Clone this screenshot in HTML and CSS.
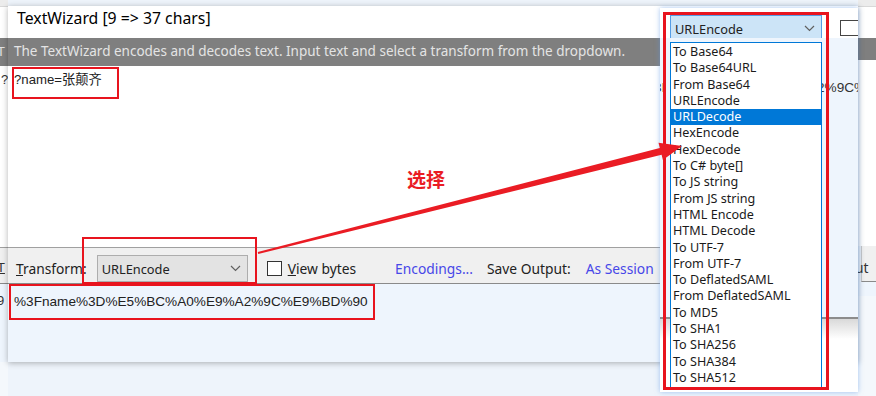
FILE: index.html
```html
<!DOCTYPE html>
<html lang="zh-CN">
<head>
    <meta charset="UTF-8">
    <meta name="viewport" content="width=device-width, initial-scale=1.0">
    <title>TextWizard</title>
    <link rel="stylesheet" href="styles.css">
</head>
<body>

<div class="desk">
    <!-- Fenster dahinter, linker Rand -->
    <div class="edge edge-left">
        <div class="edge-top"></div>
        <div class="edge-title"></div>
        <div class="edge-hint"><span class="cut">T</span></div>
        <div class="edge-input"><span>?</span></div>
        <div class="edge-bar"><span class="cut"><u>T</u></span></div>
        <div class="edge-output"><span class="cut">9</span></div>
        <div class="edge-rest"></div>
    </div>

    <!-- TextWizard Fenster -->
    <div class="wizard">
        <div class="title">TextWizard [9 =&gt; 37 chars]</div>
        <div class="hint">The TextWizard encodes and decodes text. Input text and select a transform from the dropdown.</div>
        <div class="input">?name=张颠齐</div>
        <div class="toolbar">
            <span class="label"><u>T</u>ransform:</span>
            <div class="combo">
                <span>URLEncode</span>
                <svg width="11" height="7" viewBox="0 0 11 7"><path d="M1 1 L5.5 5.5 L10 1" fill="none" stroke="#606060" stroke-width="1.2"/></svg>
            </div>
            <span class="check"></span>
            <span class="label"><u>V</u>iew bytes</span>
            <span class="link link-enc">Encodings...</span>
            <span class="label">Save Output:</span>
            <span class="link">As Session</span>
        </div>
        <div class="output">%3Fname%3D%E5%BC%A0%E9%A2%9C%E9%BD%90</div>
    </div>

    <!-- Fenster dahinter, rechter Rand -->
    <div class="edge edge-right">
        <div class="edge-top"></div>
        <div class="edge-title"></div>
        <div class="edge-hint-short"></div>
        <div class="edge-input-long"></div>
        <div class="edge-bar"><span>ut</span></div>
        <div class="edge-output-short"></div>
        <div class="edge-rest"></div>
    </div>
</div>

<!-- Ausgeklapptes Dropdown (eingefuegter Ausschnitt) -->
<div class="popup">
    <div class="popup-top">
        <div class="combo combo-open">
            <span>URLEncode</span>
            <svg width="11" height="7" viewBox="0 0 11 7"><path d="M1 1 L5.5 5.5 L10 1" fill="none" stroke="#606060" stroke-width="1.2"/></svg>
        </div>
        <span class="check check-cut"></span>
    </div>
    <div class="popup-body">
        <span class="ghost ghost-left">3I</span>
        <span class="ghost ghost-right">2%9C%</span>
    </div>
    <div class="popup-foot"></div>
    <ul class="list">
        <li>To Base64</li>
        <li>To Base64URL</li>
        <li>From Base64</li>
        <li>URLEncode</li>
        <li class="selected">URLDecode</li>
        <li>HexEncode</li>
        <li>HexDecode</li>
        <li>To C# byte[]</li>
        <li>To JS string</li>
        <li>From JS string</li>
        <li>HTML Encode</li>
        <li>HTML Decode</li>
        <li>To UTF-7</li>
        <li>From UTF-7</li>
        <li>To DeflatedSAML</li>
        <li>From DeflatedSAML</li>
        <li>To MD5</li>
        <li>To SHA1</li>
        <li>To SHA256</li>
        <li>To SHA384</li>
        <li>To SHA512</li>
    </ul>
</div>

<!-- Markierungen -->
<div class="mark mark-input"></div>
<div class="mark mark-combo"></div>
<div class="mark mark-output"></div>
<div class="mark mark-popup"></div>
<div class="note">选择</div>
<svg class="arrow" width="876" height="396" viewBox="0 0 876 396">
    <polygon points="257.8,252 659.8,148 658.5,142.7 682,146 662.9,160.1 661.6,154.8 258.2,254" fill="#ea1c24"/>
</svg>

</body>
</html>
```

FILE: styles.css
```css
body {
    margin: 0;
    background-color: #eef4fb;
    font-family: "Noto Sans", "Open Sans", sans-serif;
    overflow: hidden;
}
.desk {
    display: flex;
    height: 396px;
    width: 876px;
}

/* Raender des Fensters dahinter */
.edge {
    display: flex;
    flex-direction: column;
    overflow: hidden;
    font-family: "Liberation Sans", Arial, sans-serif;
    font-size: 13px;
    color: #333;
}
.edge-left {
    width: 8px;
}
.edge-right {
    width: 18px;
}
.edge span {
    display: block;
    white-space: nowrap;
}
.edge-left span {
    margin-left: 1px;
}
.edge-left span.cut {
    margin-left: -3px;
}
.edge-top {
    height: 6px;
    background-color: #ececec;
    border-bottom: 1px solid #d8d8d8;
}
.edge-title {
    height: 31px;
    background-color: white;
}
.edge-hint {
    height: 28px;
    background-color: #7f7f7f;
    color: #e2e2e2;
    line-height: 28px;
}
.edge-input {
    height: 181px;
    background-color: white;
    border-bottom: 1px solid #a0a0a0;
    line-height: 28px;
}
.edge-bar {
    height: 35px;
    background-color: #f0f0f0;
    border-bottom: 1px solid #8a8a8a;
    line-height: 40px;
}
.edge-output {
    height: 78px;
    background-color: #eef5fd;
    line-height: 34px;
}
.edge-rest {
    flex: 1;
    background-color: #f4f8fc;
}
.edge-hint-short {
    height: 22px;
    background-color: #7f7f7f;
}
.edge-input-long {
    height: 186px;
    background-color: white;
}
.edge-right .edge-bar {
    margin-left: 3px;
    border-left: 1px solid #c8c8c8;
    line-height: 44px;
}
.edge-right .edge-bar span {
    margin-left: -7px;
    font-family: "Noto Sans", sans-serif;
    font-size: 13.8px;
}
.edge-output-short {
    height: 14px;
    background-color: #eef5fd;
}

/* TextWizard Fenster */
.wizard {
    width: 850px;
    height: 356px;
    margin-top: 6px;
    display: flex;
    flex-direction: column;
    background-color: white;
    box-shadow: 0 1px 6px rgba(0, 0, 0, 0.3);
    z-index: 1;
}
.title {
    height: 32px;
    flex-shrink: 0;
    padding-left: 9px;
    font-size: 15.8px;
    line-height: 25px;
    color: black;
}
.hint {
    height: 28px;
    flex-shrink: 0;
    background-color: #7f7f7f;
    color: #e4e4e4;
    font-size: 13.5px;
    line-height: 27px;
    padding-left: 6px;
    white-space: nowrap;
}
.input {
    height: 182px;
    flex-shrink: 0;
    padding: 5px 6px 0;
    box-sizing: border-box;
    font-family: "Liberation Sans", "Noto Sans CJK SC", sans-serif;
    font-size: 13.2px;
    line-height: 18px;
    color: #222;
    border-bottom: 1px solid #a0a0a0;
}
.toolbar {
    height: 36px;
    flex-shrink: 0;
    display: flex;
    align-items: center;
    background-color: #f0f0f0;
    border-bottom: 1px solid #8a8a8a;
    padding-left: 8px;
    padding-top: 6px;
    box-sizing: border-box;
    font-size: 13.8px;
    color: #222;
}
.label u {
    text-decoration-thickness: 1px;
}
.combo {
    width: 151px;
    height: 27px;
    flex-shrink: 0;
    box-sizing: border-box;
    margin-left: 10px;
    display: flex;
    align-items: center;
    justify-content: space-between;
    padding: 0 6px 0 4px;
    background-color: #e3e3e3;
    border: 1px solid #adadad;
    font-size: 12.8px;
    color: #222;
}
.check {
    width: 15px;
    height: 15px;
    flex-shrink: 0;
    box-sizing: border-box;
    border: 1px solid #333;
    background-color: white;
    margin-left: 19px;
    margin-right: 6px;
}
.link {
    color: #4747e8;
}
.link-enc {
    margin-left: 39px;
    margin-right: 14px;
}
.link-enc + .label {
    margin-right: 15px;
}
.output {
    flex: 1;
    background-color: #eef5fd;
    padding: 10px 6px 0;
    font-family: "Liberation Sans", Arial, sans-serif;
    font-size: 13.6px;
    line-height: 16px;
    color: #222;
}

/* Dropdown */
.popup {
    position: absolute;
    left: 660px;
    top: 8px;
    width: 198px;
    height: 384px;
    display: flex;
    flex-direction: column;
    box-shadow: 0 0 5px rgba(90, 150, 230, 0.55);
    z-index: 2;
    overflow: hidden;
}
.popup-top {
    height: 30px;
    flex-shrink: 0;
    background-color: white;
    display: flex;
    align-items: flex-start;
    padding-top: 7px;
    box-sizing: border-box;
}
.combo-open {
    width: 152px;
    height: 27px;
    margin-left: 10px;
    background-color: #cce4f7;
    border: 1px solid #569de5;
}
.check-cut {
    margin: 5px 0 0 18px;
    border-color: #444;
    width: 20px;
    height: 16px;
}
.popup-body {
    height: 279px;
    flex-shrink: 0;
    position: relative;
    background-color: #eef5fd;
    border-bottom: 2px solid #8c8c8c;
    font-family: "Liberation Sans", Arial, sans-serif;
    font-size: 13.6px;
    color: #333;
}
.ghost {
    position: absolute;
    top: 42px;
}
.ghost-left {
    left: -6px;
}
.ghost-right {
    left: 157px;
}
.popup-foot {
    flex: 1;
    background: linear-gradient(#d9d9d9, #ffffff 20px);
}
.list {
    position: absolute;
    left: 10px;
    top: 34px;
    width: 152px;
    margin: 0;
    padding: 1px 0;
    list-style: none;
    box-sizing: border-box;
    background-color: white;
    border: 1px solid #0078d7;
    font-size: 12.6px;
    color: #1a1a1a;
}
.list li {
    height: 16.3px;
    line-height: 16.3px;
    padding-left: 2px;
    white-space: nowrap;
}
.list li.selected {
    background-color: #0078d7;
    color: white;
}

/* Rote Markierungen */
.mark {
    position: absolute;
    border: 2px solid #e8141e;
    z-index: 3;
}
.mark-input {
    left: 12px;
    top: 67px;
    width: 103px;
    height: 28px;
}
.mark-combo {
    left: 82px;
    top: 237px;
    width: 171px;
    height: 43px;
}
.mark-output {
    left: 9px;
    top: 284px;
    width: 362px;
    height: 32px;
}
.mark-popup {
    left: 663px;
    top: 12px;
    width: 160px;
    height: 372px;
    border-width: 3px;
}
.note {
    position: absolute;
    left: 407px;
    top: 166px;
    font-family: "Noto Sans CJK SC", sans-serif;
    font-weight: bold;
    font-size: 19px;
    line-height: 26px;
    color: #ea1c24;
    z-index: 3;
}
.arrow {
    position: absolute;
    left: 0;
    top: 0;
    z-index: 4;
}
```
